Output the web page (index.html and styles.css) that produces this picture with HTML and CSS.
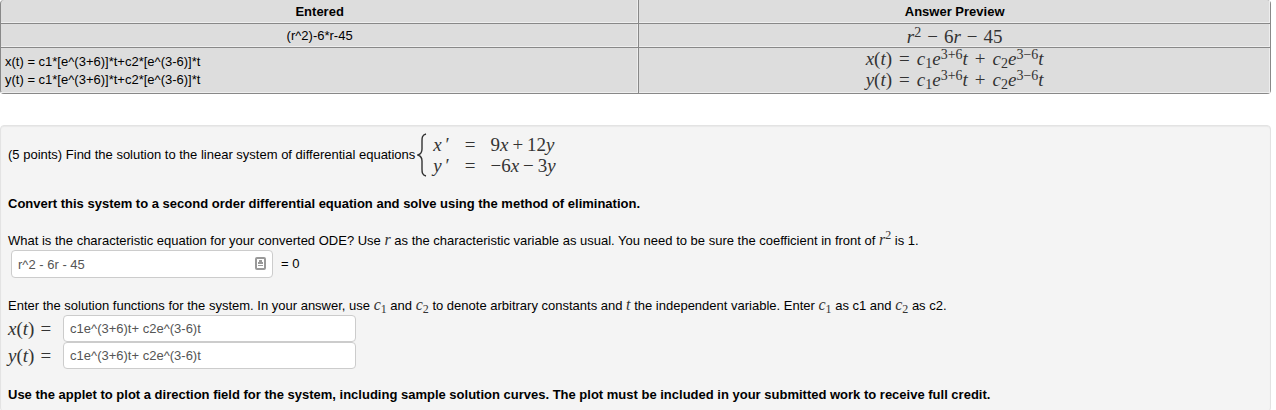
FILE: index.html
```html
<!DOCTYPE html>
<html lang="en">
<head>
<meta charset="utf-8">
<title>Differential equations problem</title>
<link rel="stylesheet" href="styles.css">
</head>
<body>
<table class="results">
  <thead>
    <tr><th>Entered</th><th>Answer Preview</th></tr>
  </thead>
  <tbody>
    <tr>
      <td>(r^2)-6*r-45</td>
      <td class="preview"><div class="math"><i>r</i><sup>2</sup><span class="op">−</span>6<i>r</i><span class="op">−</span>45</div></td>
    </tr>
    <tr>
      <td class="entered-functions">x(t) = c1*[e^(3+6)]*t+c2*[e^(3-6)]*t<br>y(t) = c1*[e^(3+6)]*t+c2*[e^(3-6)]*t</td>
      <td class="preview-functions">
        <div class="math"><i>x</i>(<i>t</i>)<span class="op">=</span><i>c</i><sub>1</sub><i>e</i><sup>3+6</sup><i>t</i><span class="op">+</span><i>c</i><sub>2</sub><i>e</i><sup>3−6</sup><i>t</i></div>
        <div class="math"><i>y</i>(<i>t</i>)<span class="op">=</span><i>c</i><sub>1</sub><i>e</i><sup>3+6</sup><i>t</i><span class="op">+</span><i>c</i><sub>2</sub><i>e</i><sup>3−6</sup><i>t</i></div>
      </td>
    </tr>
  </tbody>
</table>

<main class="problem">
  <div class="statement">
    <span>(5 points) Find the solution to the linear system of differential equations</span>
    <svg class="brace" viewBox="0 0 10 44" aria-hidden="true"><path d="M9 1C5 2 5 5 5 8V16C5 19 4 21 1 22C4 23 5 25 5 28V36C5 39 5 42 9 43"/></svg>
    <div class="system math">
      <span><i>x</i>&thinsp;′</span><span>=</span><span>9<i>x</i><span class="op">+</span>12<i>y</i></span>
      <span><i>y</i>&thinsp;′</span><span>=</span><span>−6<i>x</i><span class="op">−</span>3<i>y</i></span>
    </div>
  </div>

  <p class="instruction"><b>Convert this system to a second order differential equation and solve using the method of elimination.</b></p>

  <section class="question">
    <label class="prompt" for="characteristic">What is the characteristic equation for your converted ODE? Use <span class="math small"><i>r</i></span> as the characteristic variable as usual. You need to be sure the coefficient in front of <span class="math small"><i>r</i><sup>2</sup></span> is 1.</label>
    <div class="characteristic">
      <div class="field">
        <input class="answer" id="characteristic" type="text" value="r^2 - 6r - 45">
        <svg class="autofill" viewBox="0 0 11 13" aria-hidden="true"><rect x="1" y="1" width="9" height="11" rx="1"/><path class="mark" d="M4 3h3v2h1v2H3V5h1zM3 8h5v1H3z"/></svg>
      </div>
      <span>= 0</span>
    </div>
  </section>

  <section class="question">
    <p class="prompt">Enter the solution functions for the system. In your answer, use <span class="math small"><i>c</i><sub>1</sub></span> and <span class="math small"><i>c</i><sub>2</sub></span> to denote arbitrary constants and <span class="math small"><i>t</i></span> the independent variable. Enter <span class="math small"><i>c</i><sub>1</sub></span> as c1 and <span class="math small"><i>c</i><sub>2</sub></span> as c2.</p>
    <div class="function">
      <label class="math" for="x-answer"><i>x</i>(<i>t</i>)<span class="op">=</span></label>
      <input class="answer" id="x-answer" type="text" value="c1e^(3+6)t+ c2e^(3-6)t">
    </div>
    <div class="function">
      <label class="math" for="y-answer"><i>y</i>(<i>t</i>)<span class="op">=</span></label>
      <input class="answer" id="y-answer" type="text" value="c1e^(3+6)t+ c2e^(3-6)t">
    </div>
  </section>

  <p class="instruction"><b>Use the applet to plot a direction field for the system, including sample solution curves. The plot must be included in your submitted work to receive full credit.</b></p>
</main>
</body>
</html>
```
FILE: styles.css
```css
* { box-sizing: border-box; }

body {
  margin: 0;
  padding-right: 5px;
  overflow: hidden;
  background: #fff;
  color: #000;
  font: 13px/18px "Liberation Sans", Arial, sans-serif;
}

p { margin: 0; }

.results {
  width: 100%;
  table-layout: fixed;
  border-collapse: separate;
  border-spacing: 0;
  border: 1px solid #888;
  border-top: 0;
  border-radius: 4px;
  background: #ddd;
  text-align: center;
}

.results th,
.results td {
  padding: 2px 4px;
  border-bottom: 1px solid #888;
  box-shadow: inset -1px -1px #eee;
  vertical-align: middle;
}

.results th { padding: 3px 4px 2px; }
.results th:first-child { width: 50.3%; }
.results tr > :first-child { border-right: 1px solid #888; }
.results tbody tr:last-child td { border-bottom: 0; }
.results .entered-functions { text-align: left; }
.results .preview { padding: 2px 4px 0; }
.results .preview-functions { padding: 0 4px 3px; }

.math {
  color: #333;
  font: 19px/21px "Liberation Serif", "Times New Roman", serif;
  white-space: nowrap;
}

.math sup,
.math sub {
  font-size: 14px;
  line-height: 0;
}

.math sup { vertical-align: 6px; }
.math sub { vertical-align: -3px; }
.op { margin: 0 6px; }
.preview-functions .op { margin: 0 7px; }

.math.small {
  font-size: 16px;
  line-height: 16px;
}

.math.small sup,
.math.small sub { font-size: 12px; }

.problem {
  margin-top: 31px;
  padding: 7px;
  border: 1px solid #e3e3e3;
  border-radius: 4px;
  background: #f4f4f4;
  box-shadow: inset 0 1px 1px #e9e9e9;
}

.statement {
  display: flex;
  align-items: center;
}

.brace {
  width: 10px;
  height: 44px;
  margin: 0 6px 0 2px;
  fill: none;
  stroke: #333;
  stroke-width: 1.4;
}

.system {
  display: grid;
  grid-template-columns: auto auto auto;
  column-gap: 15px;
}

.system .op { margin: 0 4px; }

.instruction { margin-top: 18px; }

.question { margin-top: 19px; }

.prompt {
  display: block;
  line-height: 18px;
}

.characteristic {
  display: flex;
  align-items: center;
  gap: 8px;
  padding-left: 3px;
}

.field {
  position: relative;
  width: 262px;
}

.answer {
  display: block;
  width: 100%;
  height: 28px;
  padding: 0 6px;
  border: 1px solid #ccc;
  border-radius: 4px;
  background: #fff;
  color: #555;
  font: 13px/18px "Liberation Sans", Arial, sans-serif;
}

.autofill {
  position: absolute;
  top: 7px;
  right: 7px;
  width: 11px;
  height: 13px;
  fill: #fff;
  stroke: #999;
  stroke-width: 2;
}

.autofill .mark {
  fill: #999;
  stroke: none;
}

.function {
  display: flex;
  align-items: center;
  gap: 6px;
}

.function .answer {
  width: 293px;
  height: 27px;
}

.question + .instruction { margin-top: 17px; }
```
